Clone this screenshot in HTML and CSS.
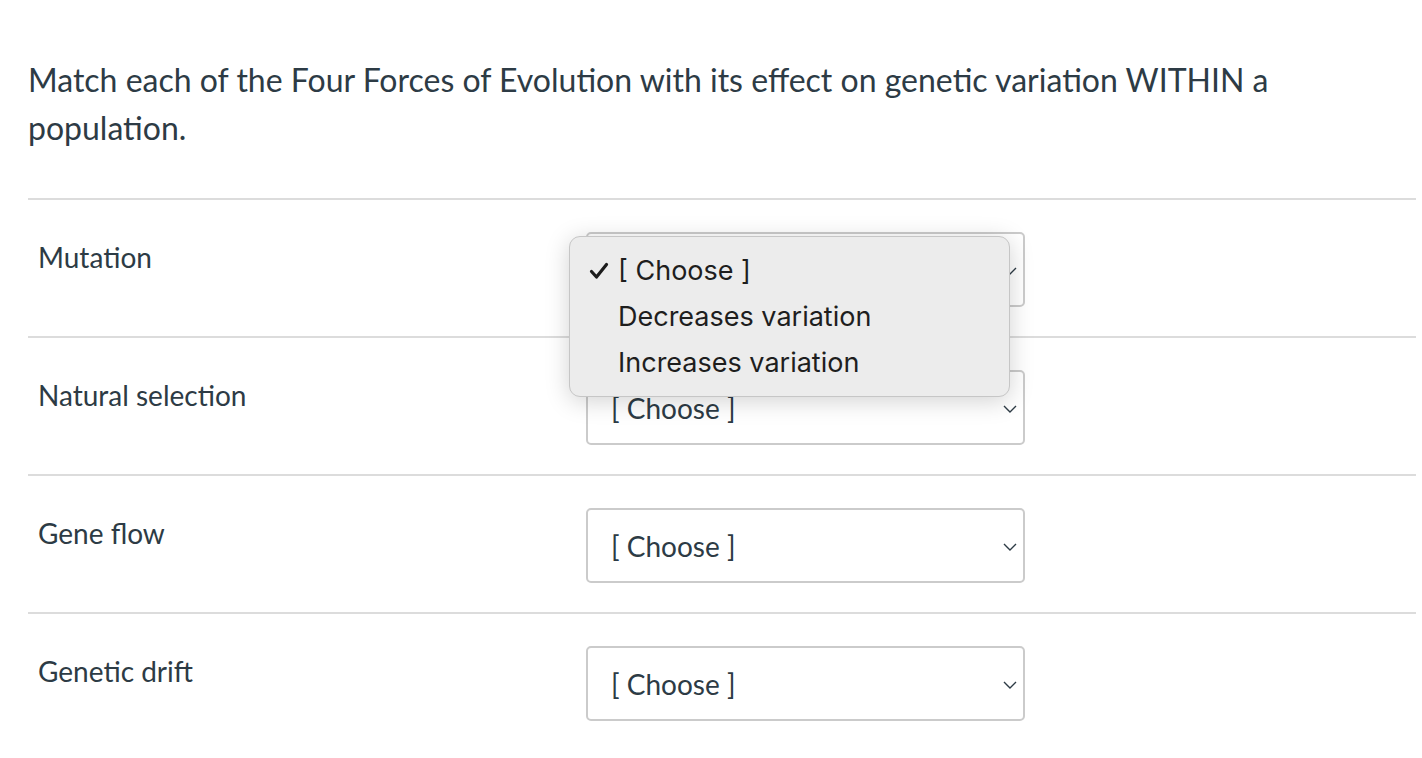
FILE: index.html
```html
<!DOCTYPE html>
<html>
<head>
<meta charset="utf-8">
<link rel="stylesheet" href="styles.css">
</head>
<body>
<div class="quiz">
  <p class="question">Match each of the Four Forces of Evolution with its effect on genetic variation WITHIN a population.</p>
  <div class="answers">
    <div class="row">
      <div class="label">Mutation</div>
      <div class="select-wrap">
        <div class="select"><span>[ Choose ]</span><svg class="chev" viewBox="0 0 14 8" width="14" height="8"><path d="M1 1 L7 7 L13 1" fill="none" stroke="#2d3b45" stroke-width="1.4"/></svg></div>
        <div class="menu">
          <div class="item selected"><svg class="check" viewBox="0 0 20 18" width="20" height="18"><path d="M2.5 9.5 L7.5 15 L17.5 2.5" fill="none" stroke="#1c1c1c" stroke-width="3.2" stroke-linecap="round" stroke-linejoin="round"/></svg>[ Choose ]</div>
          <div class="item">Decreases variation</div>
          <div class="item">Increases variation</div>
        </div>
      </div>
    </div>
    <div class="row">
      <div class="label">Natural selection</div>
      <div class="select-wrap">
        <div class="select"><span>[ Choose ]</span><svg class="chev" viewBox="0 0 14 8" width="14" height="8"><path d="M1 1 L7 7 L13 1" fill="none" stroke="#2d3b45" stroke-width="1.4"/></svg></div>
      </div>
    </div>
    <div class="row">
      <div class="label">Gene flow</div>
      <div class="select-wrap">
        <div class="select"><span>[ Choose ]</span><svg class="chev" viewBox="0 0 14 8" width="14" height="8"><path d="M1 1 L7 7 L13 1" fill="none" stroke="#2d3b45" stroke-width="1.4"/></svg></div>
      </div>
    </div>
    <div class="row">
      <div class="label">Genetic drift</div>
      <div class="select-wrap">
        <div class="select"><span>[ Choose ]</span><svg class="chev" viewBox="0 0 14 8" width="14" height="8"><path d="M1 1 L7 7 L13 1" fill="none" stroke="#2d3b45" stroke-width="1.4"/></svg></div>
      </div>
    </div>
  </div>
</div>
</body>
</html>
```
FILE: styles.css
```css
html, body {
  margin: 0;
  padding: 0;
  background: #ffffff;
}
body {
  font-family: Lato, "Open Sans", sans-serif;
  color: #2d3b45;
}
.quiz {
  margin: 0 6px 0 28px;
  padding-top: 56px;
}
.question {
  margin: 0 0 46px 0;
  font-size: 32px;
  line-height: 48px;
}
.answers {
  border-top: 2px solid #dcdcdc;
}
.row {
  display: grid;
  grid-template-columns: 558px 439px;
  height: 136px;
  border-bottom: 2px solid #dcdcdc;
}
.row:last-child {
  border-bottom: none;
}
.label {
  padding: 40px 0 0 10px;
  font-size: 28px;
  line-height: 34px;
}
.select-wrap {
  position: relative;
  padding-top: 32px;
}
.select {
  box-sizing: border-box;
  height: 75px;
  border: 2px solid #cbcbcb;
  border-radius: 5px;
  display: flex;
  align-items: center;
  justify-content: space-between;
  padding: 0 6px 0 23px;
  font-size: 28px;
}
.chev {
  margin-top: 2px;
}
.menu {
  position: absolute;
  left: -17px;
  top: 36px;
  width: 441px;
  box-sizing: border-box;
  background: #ececec;
  border: 1px solid #c6c6c6;
  border-radius: 11px;
  box-shadow: 0 4px 24px rgba(0, 0, 0, 0.18);
  padding: 11px 0 10px 0;
  font-family: "Inter", "Liberation Sans", sans-serif;
  color: #1e1e1e;
  z-index: 2;
}
.item {
  height: 46px;
  line-height: 46px;
  font-size: 27px;
  padding-left: 48px;
  position: relative;
}
.check {
  position: absolute;
  left: 19px;
  top: 14px;
}
```
